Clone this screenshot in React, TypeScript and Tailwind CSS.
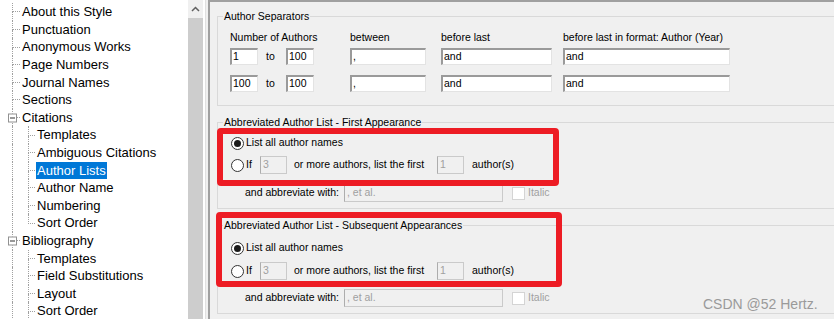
import React from 'react';

type TreeItem = {
  label: string;
  level: 0 | 1;
  expanded?: boolean;
  last?: boolean;
  selected?: boolean;
};

const tree: TreeItem[] = [
  { label: 'About this Style', level: 0 },
  { label: 'Punctuation', level: 0 },
  { label: 'Anonymous Works', level: 0 },
  { label: 'Page Numbers', level: 0 },
  { label: 'Journal Names', level: 0 },
  { label: 'Sections', level: 0 },
  { label: 'Citations', level: 0, expanded: true },
  { label: 'Templates', level: 1 },
  { label: 'Ambiguous Citations', level: 1 },
  { label: 'Author Lists', level: 1, selected: true },
  { label: 'Author Name', level: 1 },
  { label: 'Numbering', level: 1 },
  { label: 'Sort Order', level: 1, last: true },
  { label: 'Bibliography', level: 0, expanded: true },
  { label: 'Templates', level: 1 },
  { label: 'Field Substitutions', level: 1 },
  { label: 'Layout', level: 1 },
  { label: 'Sort Order', level: 1 },
];

const TreeRow: React.FC<{ item: TreeItem }> = ({ item }) => {
  return (
    <div className="relative flex h-[17.6px] items-stretch">
      <div className="w-[12px] shrink-0" />
      {item.level === 0 ? (
        <div className="flex w-[8px] shrink-0 flex-col">
          <div className="flex-1 border-b border-l border-dotted border-[#a0a0a0]" />
          <div className="flex-1 border-l border-dotted border-[#a0a0a0]" />
        </div>
      ) : (
        <>
          <div className="w-[16px] shrink-0 border-l border-dotted border-[#a0a0a0]" />
          <div className="flex w-[7px] shrink-0 flex-col">
            <div className="flex-1 border-b border-l border-dotted border-[#a0a0a0]" />
            <div className={item.last ? 'flex-1' : 'flex-1 border-l border-dotted border-[#a0a0a0]'} />
          </div>
        </>
      )}
      {item.level === 0 ? (
        <span className="ml-[2px] flex items-center whitespace-nowrap">{item.label}</span>
      ) : (
        <span
          className={
            item.selected
              ? 'ml-[1px] flex items-center whitespace-nowrap bg-[#0078d7] px-[1px] text-white'
              : 'ml-[1px] flex items-center whitespace-nowrap px-[1px]'
          }
        >
          {item.label}
        </span>
      )}
      {item.expanded && (
        <div className="absolute left-[8px] top-1/2 flex h-[9px] w-[9px] -translate-y-1/2 items-center justify-center border border-[#919191] bg-white">
          <div className="h-px w-[5px] bg-[#333]" />
        </div>
      )}
    </div>
  );
};

const TextBox: React.FC<{ value: string; className: string }> = ({ value, className }) => (
  <div
    className={`flex h-[17px] items-center border-l-2 border-t-2 border-b border-r border-l-[#9a9a9a] border-t-[#9a9a9a] border-b-[#e3e3e3] border-r-[#e3e3e3] bg-white pl-[1px] text-black ${className}`}
  >
    {value}
  </div>
);

const DisabledBox: React.FC<{ value: string; className: string }> = ({ value, className }) => (
  <div
    className={`flex h-[18px] items-center border border-[#cacaca] border-l-[#adadad] bg-[#f0f0f0] pl-[2px] text-[#a0a0a0] ${className}`}
  >
    {value}
  </div>
);

const Radio: React.FC<{ checked?: boolean }> = ({ checked }) => (
  <span className="flex h-[13px] w-[13px] shrink-0 items-center justify-center rounded-full border border-[#333] bg-white">
    {checked && <span className="h-[7px] w-[7px] rounded-full bg-[#1b1b1b]" />}
  </span>
);

interface AbbrevProps {
  title: string;
  outer: string;
  top: string;
  second: string;
  third: string;
}

const AbbrevGroup: React.FC<AbbrevProps> = ({ title, outer, top, second, third }) => (
  <fieldset className={`w-[700px] border border-[#d9d9d9] pb-[6px] ${outer}`}>
    <legend className="ml-[5px] px-[1px] leading-[13px]">{title}</legend>
    <div className={`flex h-[18px] items-center pl-[13px] ${top}`}>
      <Radio checked />
      <span className="ml-[2px]">List all author names</span>
    </div>
    <div className={`flex h-[18px] items-center pl-[13px] ${second}`}>
      <Radio />
      <span className="ml-[2px] w-[14px]">If</span>
      <DisabledBox value="3" className="w-[27px]" />
      <span className="ml-[7px] w-[143px] whitespace-nowrap">or more authors, list the first</span>
      <DisabledBox value="1" className="w-[27px]" />
      <span className="ml-[8px]">author(s)</span>
    </div>
    <div className={`flex h-[18px] items-center pl-[27px] ${third}`}>
      <span className="w-[99px] whitespace-nowrap">and abbreviate with:</span>
      <DisabledBox value=", et al." className="w-[159px]" />
      <span className="ml-[9px] h-[13px] w-[13px] border border-[#d4d4d4] bg-white" />
      <span className="ml-[3px] text-[#a0a0a0]">Italic</span>
    </div>
  </fieldset>
);

export default function App() {
  return (
    <div className="relative flex h-[319px] w-[834px] overflow-hidden bg-white font-['Liberation_Sans',Arial,sans-serif]">
      {/* style tree */}
      <div className="w-[188px] shrink-0 overflow-hidden bg-white pt-[3.2px] text-[13px] text-black">
        {tree.map((item, i) => (
          <TreeRow key={i} item={item} />
        ))}
      </div>

      {/* scrollbar */}
      <div className="flex w-[15px] shrink-0 flex-col bg-[#f0f0f0]">
        <div className="flex h-[18px] items-center justify-center">
          <svg width="9" height="6" viewBox="0 0 9 6">
            <polyline points="1,5 4.5,1.5 8,5" fill="none" stroke="#606060" strokeWidth="1.5" />
          </svg>
        </div>
        <div className="flex-1 bg-[#cdcdcd]" />
      </div>

      {/* splitter */}
      <div className="flex w-[5px] shrink-0">
        <div className="w-[2px] bg-white" />
        <div className="w-px bg-[#e0e0e0]" />
        <div className="w-[2px] bg-[#f0f0f0]" />
      </div>

      {/* settings panel */}
      <div className="flex-1 overflow-hidden border-l-2 border-t-2 border-[#a0a0a0] bg-[#f0f0f0] pl-[7px] text-[10.5px] text-black">
        <fieldset className="mt-[8px] w-[700px] border border-[#d9d9d9] pb-[13px]">
          <legend className="ml-[5px] px-[1px] leading-[13px]">Author Separators</legend>
          <div className="grid grid-cols-[120px_91px_122px_167px] pl-[12px] pt-[8px]">
            <span className="leading-[13px]">Number of Authors</span>
            <span className="leading-[13px]">between</span>
            <span className="leading-[13px]">before last</span>
            <span className="whitespace-nowrap leading-[13px]">before last in format: Author (Year)</span>

            <div className="mt-[4px] flex items-center">
              <TextBox value="1" className="w-[28px]" />
              <span className="ml-[8px] w-[20px]">to</span>
              <TextBox value="100" className="w-[28px]" />
            </div>
            <div className="mt-[4px]">
              <TextBox value="," className="w-[76px]" />
            </div>
            <div className="mt-[4px]">
              <TextBox value="and" className="w-[111px]" />
            </div>
            <div className="mt-[4px]">
              <TextBox value="and" className="w-[167px]" />
            </div>

            <div className="mt-[10px] flex items-center">
              <TextBox value="100" className="w-[28px]" />
              <span className="ml-[8px] w-[20px]">to</span>
              <TextBox value="100" className="w-[28px]" />
            </div>
            <div className="mt-[10px]">
              <TextBox value="," className="w-[76px]" />
            </div>
            <div className="mt-[10px]">
              <TextBox value="and" className="w-[111px]" />
            </div>
            <div className="mt-[10px]">
              <TextBox value="and" className="w-[167px]" />
            </div>
          </div>
        </fieldset>

        <AbbrevGroup
          title="Abbreviated Author List - First Appearance"
          outer="mt-[10px]"
          top="mt-[5px]"
          second="mt-[4px]"
          third="mt-[10px]"
        />
        <AbbrevGroup
          title="Abbreviated Author List - Subsequent Appearances"
          outer="mt-[10px]"
          top="mt-[7px]"
          second="mt-[5px]"
          third="mt-[9px]"
        />
      </div>

      {/* annotation boxes */}
      <div className="pointer-events-none absolute left-[217px] top-[128px] h-[58px] w-[342px] rounded-[4px] border-[6px] border-[#ed1c24]" />
      <div className="pointer-events-none absolute left-[216px] top-[212px] h-[75px] w-[346px] rounded-[4px] border-[6px] border-[#ed1c24]" />

      {/* watermark */}
      <span className="pointer-events-none absolute left-[703px] top-[296px] text-[14px] leading-[16px] text-[#9a9a9a]">
        CSDN @52 Hertz.
      </span>
    </div>
  );
}
